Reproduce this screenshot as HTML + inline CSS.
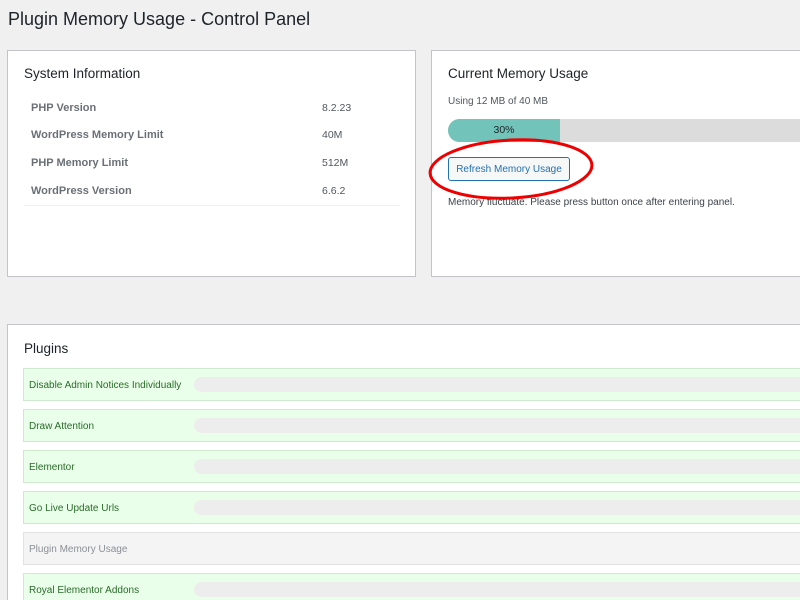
<!DOCTYPE html>
<html style="width:800px;height:600px;overflow:hidden"><head><style>
body{margin:0;width:800px;height:600px;overflow:hidden;background:#f0f0f1;font-family:"Liberation Sans",sans-serif;position:relative;color:#3c434a}
.a{position:absolute}
.panel{position:absolute;background:#fff;border:1px solid #c3c4c7;box-sizing:border-box}
h1{position:absolute;left:8px;top:9px;margin:0;font-size:18px;font-weight:400;color:#1d2327}
.h{font-size:13.5px;color:#1d2327;position:absolute}
.row{position:absolute;left:31px;font-size:11px;color:#50575e;font-weight:bold;opacity:.85}
.val{position:absolute;left:322px;font-size:10.5px;color:#50575e}
.pl{position:absolute;left:23px;width:800px;height:33px;background:#eaffea;border:1px solid #cfe9cf;font-size:10px;color:#2a6b2a;box-sizing:border-box}
.pl span{position:absolute;left:5px;top:11px}
.pl i{position:absolute;left:170px;top:8px;width:640px;height:15px;border-radius:8px;background:#ededed}
</style></head><body>
<h1>Plugin Memory Usage - Control Panel</h1>
<div class="panel" style="left:7px;top:50px;width:409px;height:227px"></div>
<div class="h" style="left:24px;top:66px">System Information</div>
<div class="row" style="top:102px">PHP Version</div><div class="val" style="top:102px">8.2.23</div>
<div class="row" style="top:129px">WordPress Memory Limit</div><div class="val" style="top:129px">40M</div>
<div class="row" style="top:157px">PHP Memory Limit</div><div class="val" style="top:157px">512M</div>
<div class="row" style="top:185px">WordPress Version</div><div class="val" style="top:185px">6.6.2</div>
<div class="a" style="left:24px;top:205px;width:376px;height:1px;background:#f0f0f1"></div>
<div class="panel" style="left:431px;top:50px;width:400px;height:227px"></div>
<div class="h" style="left:448px;top:66px">Current Memory Usage</div>
<div class="a" style="left:448px;top:96px;font-size:10px;color:#50575e">Using 12 MB of 40 MB</div>
<div class="a" style="left:448px;top:119px;width:400px;height:23px;background:#dcdcdc;border-radius:12px 0 0 12px"></div>
<div class="a" style="left:448px;top:119px;width:112px;height:23px;background:#72c3b9;border-radius:12px 0 0 12px;font-size:10.5px;color:#1d2327;text-align:center;line-height:23px">30%</div>
<div class="a" style="left:448px;top:157px;width:122px;height:24px;border:1px solid #2271b1;border-radius:3px;background:#f6f7f7;color:#2271b1;font-size:10px;text-align:center;line-height:24px;box-sizing:border-box">Refresh Memory Usage</div>
<div class="a" style="left:448px;top:197px;font-size:10px;color:#3c434a">Memory fluctuate. Please press button once after entering panel.</div>
<svg class="a" style="left:425px;top:136px" width="175" height="66"><ellipse cx="86" cy="33" rx="81" ry="29" fill="none" stroke="#e00" stroke-width="3" transform="rotate(-3 86 33)"/></svg>
<div class="panel" style="left:7px;top:324px;width:820px;height:300px"></div>
<div class="h" style="left:24px;top:341px">Plugins</div>
<div class="pl" style="top:368px"><span>Disable Admin Notices Individually</span><i></i></div>
<div class="pl" style="top:409px"><span>Draw Attention</span><i></i></div>
<div class="pl" style="top:450px"><span>Elementor</span><i></i></div>
<div class="pl" style="top:491px"><span>Go Live Update Urls</span><i></i></div>
<div class="pl" style="top:532px;background:#f4f4f5;border-color:#e2e2e4;color:#8c8f94"><span>Plugin Memory Usage</span></div>
<div class="pl" style="top:573px"><span>Royal Elementor Addons</span><i></i></div>
</body></html>
